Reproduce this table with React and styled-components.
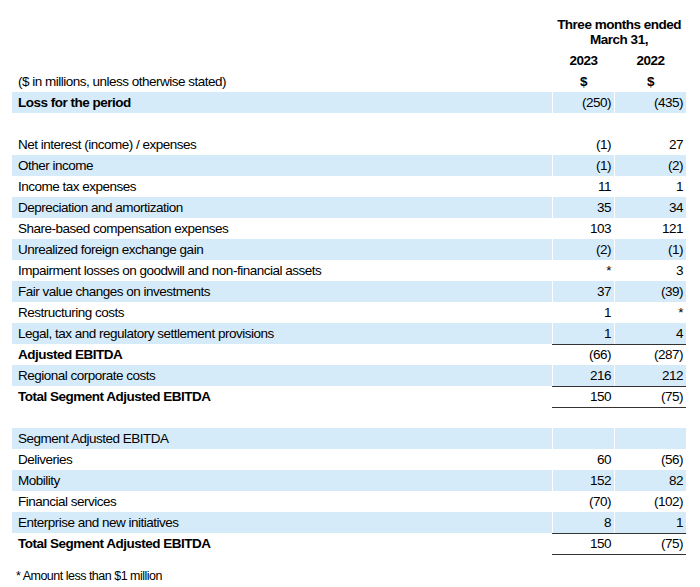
import styled, { createGlobalStyle } from 'styled-components';

const GlobalStyle = createGlobalStyle`
  body {
    margin: 0;
    background: #fff;
    font-family: "Liberation Sans", Arial, sans-serif;
    color: #000;
  }
`;

const rows = [
  { label: 'Loss for the period', a: '(250)', b: '(435)', bold: true, shade: true },
  { blank: true },
  { label: 'Net interest (income) / expenses', a: '(1)', b: '27' },
  { label: 'Other income', a: '(1)', b: '(2)', shade: true },
  { label: 'Income tax expenses', a: '11', b: '1' },
  { label: 'Depreciation and amortization', a: '35', b: '34', shade: true },
  { label: 'Share-based compensation expenses', a: '103', b: '121' },
  { label: 'Unrealized foreign exchange gain', a: '(2)', b: '(1)', shade: true },
  { label: 'Impairment losses on goodwill and non-financial assets', a: '*', b: '3' },
  { label: 'Fair value changes on investments', a: '37', b: '(39)', shade: true },
  { label: 'Restructuring costs', a: '1', b: '*' },
  { label: 'Legal, tax and regulatory settlement provisions', a: '1', b: '4', shade: true, rule: true },
  { label: 'Adjusted EBITDA', a: '(66)', b: '(287)', bold: true },
  { label: 'Regional corporate costs', a: '216', b: '212', shade: true, rule: true },
  { label: 'Total Segment Adjusted EBITDA', a: '150', b: '(75)', bold: true, rule: true },
  { blank: true },
  { label: 'Segment Adjusted EBITDA', a: '', b: '', shade: true },
  { label: 'Deliveries', a: '60', b: '(56)' },
  { label: 'Mobility', a: '152', b: '82', shade: true },
  { label: 'Financial services', a: '(70)', b: '(102)' },
  { label: 'Enterprise and new initiatives', a: '8', b: '1', shade: true, rule: true },
  { label: 'Total Segment Adjusted EBITDA', a: '150', b: '(75)', bold: true, rule: true },
];

export default function App() {
  return (
    <>
      <GlobalStyle />
      <Page>
        <Table>
          <colgroup>
            <col style={{ width: 540 }} />
            <col style={{ width: 62 }} />
            <col style={{ width: 72 }} />
          </colgroup>
          <thead>
            <TitleRow>
              <th />
              <PeriodHead colSpan={2}>
                Three months ended
                <br />
                March 31,
              </PeriodHead>
            </TitleRow>
            <Row>
              <th />
              <YearHead>2023</YearHead>
              <YearHead>2022</YearHead>
            </Row>
            <Row>
              <UnitNote>($ in millions, unless otherwise stated)</UnitNote>
              <YearHead>$</YearHead>
              <YearHead>$</YearHead>
            </Row>
          </thead>
          <tbody>
            {rows.map((r, i) =>
              r.blank ? (
                <Row key={i}>
                  <td colSpan={3} />
                </Row>
              ) : (
                <Row key={i}>
                  <Label $shade={r.shade} $bold={r.bold}>
                    {r.label}
                  </Label>
                  <Value $shade={r.shade} $bold={r.bold} $rule={r.rule}>
                    {r.a}
                  </Value>
                  <Value $shade={r.shade} $bold={r.bold} $rule={r.rule}>
                    {r.b}
                  </Value>
                </Row>
              )
            )}
          </tbody>
        </Table>
        <Footnote>* Amount less than $1 million</Footnote>
      </Page>
    </>
  );
}

const Page = styled.div`
  padding: 0 0 0 12px;
  width: 700px;
  box-sizing: border-box;
`;

const Table = styled.table`
  width: 674px;
  border-collapse: collapse;
  table-layout: fixed;
  font-size: 13.5px;
  letter-spacing: -0.5px;
  line-height: 15px;
`;

const Row = styled.tr`
  height: 21px;
`;

const TitleRow = styled.tr`
  height: 50px;
`;

const PeriodHead = styled.th`
  vertical-align: bottom;
  text-align: center;
  font-weight: bold;
  padding: 0 0 3px;
  line-height: 15px;
`;

const YearHead = styled.th`
  text-align: center;
  font-weight: bold;
  padding: 0 0 0 1px;
`;

const UnitNote = styled.td`
  padding: 0 0 0 6px;
`;

const Label = styled.td`
  padding: 0 0 0 6px;
  white-space: nowrap;
  background: ${(p) => (p.$shade ? '#d6ebfa' : 'transparent')};
  font-weight: ${(p) => (p.$bold ? 'bold' : 'normal')};
`;

const Value = styled.td`
  padding: 0 3px 0 0;
  text-align: right;
  white-space: nowrap;
  background: ${(p) => (p.$shade ? '#d6ebfa' : 'transparent')};
  box-shadow: inset 1px 0 0 #fff;
  border-bottom: ${(p) => (p.$rule ? '1px solid #333' : 'none')};
`;

const Footnote = styled.p`
  margin: 14px 0 0 4px;
  font-size: 12.5px;
  letter-spacing: -0.5px;
`;
